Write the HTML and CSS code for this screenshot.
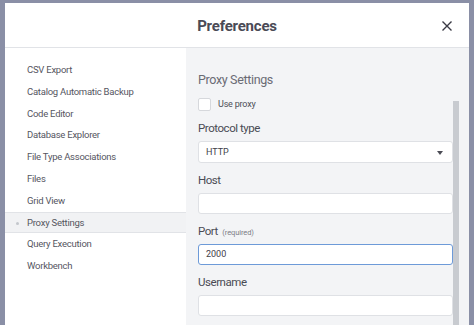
FILE: index.html
```html
<!DOCTYPE html>
<html lang="en">
<head>
  <meta charset="UTF-8" />
  <title>Preferences</title>
  <link rel="stylesheet" href="styles.css">
</head>
<body>
  <div class="dialog">
    <div class="dialog-header">
      <div class="dialog-title">Preferences</div>
      <button class="close-btn" aria-label="Close">
        <svg width="10" height="10" viewBox="0 0 10 10"><path d="M0.5 0.5L9.5 9.5M9.5 0.5L0.5 9.5" stroke="#3a3a44" stroke-width="1.4" fill="none"/></svg>
      </button>
    </div>
    <div class="dialog-body">
      <ul class="sidebar">
        <li>CSV Export</li>
        <li>Catalog Automatic Backup</li>
        <li>Code Editor</li>
        <li>Database Explorer</li>
        <li>File Type Associations</li>
        <li>Files</li>
        <li>Grid View</li>
        <li class="active">Proxy Settings</li>
        <li>Query Execution</li>
        <li>Workbench</li>
      </ul>
      <div class="panel">
        <div class="panel-title">Proxy Settings</div>
        <div class="scroll-area">
          <div class="fields">
            <label class="check-row"><span class="checkbox"></span>Use proxy</label>
            <div class="field-label first">Protocol type</div>
            <div class="select">HTTP<span class="caret"></span></div>
            <div class="field-label">Host</div>
            <div class="input"></div>
            <div class="field-label">Port <small>(required)</small></div>
            <div class="input focused">2000</div>
            <div class="field-label">Username</div>
            <div class="input"></div>
          </div>
          <div class="scrollbar"><div class="thumb"></div></div>
        </div>
      </div>
    </div>
  </div>
</body>
</html>
```

FILE: styles.css
```css
html, body {
  height: 100%;
}

body {
  margin: 0;
  background: #8a8fa6;
  font-family: Roboto, "Liberation Sans", sans-serif;
  overflow: hidden;
}

.dialog {
  margin: 3px 0 0 5px;
  width: 464px;
  height: 340px;
  background: #fff;
  display: flex;
  flex-direction: column;
}

.dialog-header {
  height: 44px;
  border-bottom: 1px solid #e1e3e7;
  display: flex;
  align-items: center;
  justify-content: center;
  position: relative;
  flex-shrink: 0;
}

.dialog-title {
  font-size: 15px;
  font-weight: 700;
  letter-spacing: -0.2px;
  color: #4a4a56;
  margin-top: 1px;
}

.close-btn {
  position: absolute;
  right: 17px;
  top: 18px;
  background: none;
  border: none;
  padding: 0;
  width: 10px;
  height: 10px;
  cursor: pointer;
}

.close-btn svg {
  display: block;
}

.dialog-body {
  flex: 1;
  display: flex;
}

.sidebar {
  list-style: none;
  margin: 0;
  padding: 11px 0 0;
  width: 181px;
  flex-shrink: 0;
}

.sidebar li {
  height: 21.8px;
  line-height: 21.8px;
  padding-left: 22px;
  font-size: 9.5px;
  letter-spacing: -0.25px;
  color: #55565f;
  box-sizing: border-box;
  position: relative;
}

.sidebar li.active {
  background: #f1f2f4;
  border-top: 1px solid #e1e3e7;
  border-bottom: 1px solid #e1e3e7;
  line-height: 19.8px;
}

.sidebar li.active::before {
  content: "";
  position: absolute;
  left: 11px;
  top: 9px;
  width: 3px;
  height: 3px;
  border-radius: 50%;
  background: #c3c6cc;
}

.panel {
  flex: 1;
  background: #f3f4f6;
  padding: 24px 10px 0 12px;
  display: flex;
  flex-direction: column;
}

.panel-title {
  font-size: 12.5px;
  letter-spacing: -0.35px;
  line-height: 16px;
  color: #6a6b74;
}

.scroll-area {
  display: flex;
  margin-top: 10px;
}

.fields {
  width: 255px;
}

.check-row {
  display: flex;
  align-items: center;
  height: 12px;
  font-size: 9px;
  letter-spacing: -0.2px;
  color: #4d4e57;
}

.checkbox {
  width: 11px;
  height: 11px;
  border: 1px solid #d6d8dc;
  border-radius: 2px;
  background: #fff;
  margin-right: 7px;
}

.field-label {
  font-size: 11.5px;
  letter-spacing: -0.45px;
  line-height: 14px;
  height: 14px;
  color: #4a4b54;
  margin: 10px 0 6px;
}

.field-label.first {
  margin-top: 11px;
}

.field-label small {
  font-size: 7.5px;
  letter-spacing: -0.1px;
  color: #7c7d86;
  margin-left: 2px;
}

.select, .input {
  height: 21px;
  box-sizing: border-box;
  background: #fff;
  border: 1px solid #dfe1e5;
  border-radius: 3px;
  font-size: 9px;
  color: #3f4049;
  padding-left: 7px;
  line-height: 19px;
  position: relative;
}

.select {
  height: 22px;
  line-height: 20px;
}

.caret {
  position: absolute;
  right: 9px;
  top: 9px;
  border-left: 3.5px solid transparent;
  border-right: 3.5px solid transparent;
  border-top: 4px solid #4b4c55;
}

.input.focused {
  border-color: #6d9ad8;
}

.scrollbar {
  width: 6px;
  padding-top: 3px;
}

.thumb {
  height: 260px;
  background: #c8cbd0;
}
```
